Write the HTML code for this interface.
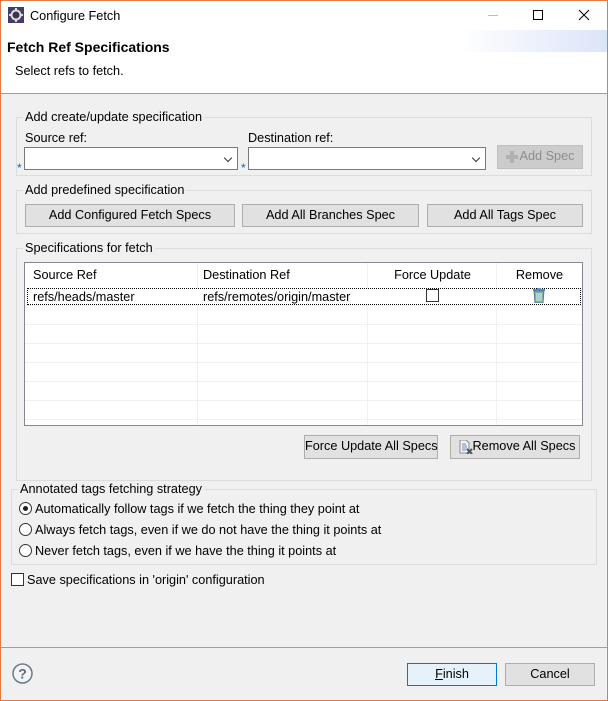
<!DOCTYPE html>
<html><head><meta charset="utf-8">
<style>
*{box-sizing:border-box;margin:0;padding:0}
body{width:608px;height:701px;position:relative;background:#f0f0f0;font-family:"Liberation Sans",sans-serif;font-size:12.7px;color:#000;overflow:hidden}
.a{position:absolute}
.t{position:absolute;white-space:nowrap;line-height:14px}
.grp{position:absolute;border:1px solid #dcdcdc}
.lg{position:absolute;background:#f0f0f0;padding:0 2px;line-height:14px;white-space:nowrap}
.btn{position:absolute;background:#e1e1e1;border:1px solid #adadad;text-align:center;line-height:21px;white-space:nowrap}
.combo{position:absolute;background:#fff;border:1px solid #7a7a7a}
.chev{position:absolute;right:6px;top:7px;width:6px;height:6px;border-right:1px solid #333;border-bottom:1px solid #333;transform:rotate(45deg)}
.radio{position:absolute;width:13px;height:13px;border:1px solid #333;border-radius:50%;background:#fff}
.hl{position:absolute;left:0;width:557px;height:1px;background:#f0f0f0}
.vl{position:absolute;top:0;width:1px;height:162px;background:#f0f0f0}
</style></head><body>
<div class="a" style="left:0;top:0;width:608px;height:701px;border:1px solid #e8793f;z-index:10;pointer-events:none"></div>
<div class="a" style="left:0;top:0;width:608px;height:31px;background:#fff"></div>
<svg class="a" style="left:8px;top:7px" width="16" height="16" viewBox="0 0 16 16"><rect width="16" height="16" fill="#4a3a6a"/><circle cx="8" cy="8" r="5.5" fill="#ddd"/><circle cx="8" cy="8" r="3.5" fill="#3b3550"/><g stroke="#ddd" stroke-width="2"><line x1="8" y1="1" x2="8" y2="3.5"/><line x1="8" y1="12.5" x2="8" y2="15"/><line x1="1" y1="8" x2="3.5" y2="8"/><line x1="12.5" y1="8" x2="15" y2="8"/></g></svg>
<div class="t" style="left:30px;top:9px;font-size:12.7px">Configure Fetch</div>
<div class="a" style="left:488px;top:15px;width:10px;height:1px;background:#bbb"></div>
<div class="a" style="left:533px;top:10px;width:10px;height:10px;border:1px solid #000"></div>
<svg class="a" style="left:578px;top:9px" width="12" height="12"><path d="M1 1L11 11M11 1L1 11" stroke="#000" stroke-width="1"/></svg>
<div class="a" style="left:0;top:31px;width:608px;height:62px;background:#fff"></div>
<div class="a" style="left:460px;top:30px;width:147px;height:22px;background:linear-gradient(90deg,rgba(220,228,248,0),#dce4f8)"></div>
<div class="t" style="left:7px;top:40px;font-size:14px;font-weight:bold">Fetch Ref Specifications</div>
<div class="t" style="left:15px;top:64px">Select refs to fetch.</div>
<div class="a" style="left:0;top:93px;width:608px;height:1px;background:#a0a0a0"></div>

<div class="grp" style="left:16px;top:117px;width:576px;height:59px"></div>
<div class="lg" style="left:23px;top:110px">Add create/update specification</div>
<div class="t" style="left:25px;top:131px">Source ref:</div>
<div class="t" style="left:248px;top:131px">Destination ref:</div>
<div class="t" style="left:17px;top:161px;color:#1f5fa8;font-size:12px">*</div>
<div class="t" style="left:241px;top:161px;color:#1f5fa8;font-size:12px">*</div>
<div class="combo" style="left:24px;top:147px;width:214px;height:23px"><div class="chev"></div></div>
<div class="combo" style="left:248px;top:147px;width:238px;height:23px"><div class="chev"></div></div>
<div class="btn" style="left:497px;top:145px;width:86px;height:24px;background:#cccccc;border-color:#bfbfbf;color:#8d8d8d;padding-left:14px">Add Spec</div>
<svg class="a" style="left:505px;top:150px" width="14" height="14"><path d="M5 1h4v4h4v4h-4v4h-4v-4h-4v-4h4z" fill="#b0b0b0"/></svg>

<div class="grp" style="left:16px;top:190px;width:576px;height:44px"></div>
<div class="lg" style="left:23px;top:183px">Add predefined specification</div>
<div class="btn" style="left:25px;top:204px;width:210px;height:23px">Add Configured Fetch Specs</div>
<div class="btn" style="left:242px;top:204px;width:177px;height:23px">Add All Branches Spec</div>
<div class="btn" style="left:427px;top:204px;width:156px;height:23px">Add All Tags Spec</div>

<div class="grp" style="left:16px;top:248px;width:576px;height:233px"></div>
<div class="lg" style="left:23px;top:241px">Specifications for fetch</div>
<div class="a" style="left:24px;top:262px;width:559px;height:164px;background:#fff;border:1px solid #828790">
  <div class="vl" style="left:172px"></div><div class="vl" style="left:342px"></div><div class="vl" style="left:471px"></div>
  <div class="hl" style="top:42px"></div><div class="hl" style="top:61px"></div><div class="hl" style="top:80px"></div><div class="hl" style="top:99px"></div><div class="hl" style="top:118px"></div><div class="hl" style="top:137px"></div><div class="hl" style="top:156px"></div>
  <div class="t" style="left:8px;top:5px">Source Ref</div>
  <div class="t" style="left:178px;top:5px">Destination Ref</div>
  <div class="t" style="left:343px;top:5px;width:129px;text-align:center">Force Update</div>
  <div class="t" style="left:472px;top:5px;width:85px;text-align:center">Remove</div>
  <div class="a" style="left:2px;top:25px;width:554px;height:17px;border:1px dotted #000;background:#fff"></div>
  <div class="t" style="left:8px;top:27px">refs/heads/master</div>
  <div class="t" style="left:178px;top:27px">refs/remotes/origin/master</div>
  <div class="a" style="left:401px;top:26px;width:13px;height:13px;border:1px solid #333;background:#fff"></div>
  <svg class="a" style="left:508px;top:25px" width="12" height="15" viewBox="0 0 12 15"><rect x="0" y="1" width="12" height="2" fill="#5a8fc0"/><rect x="4" y="0" width="4" height="1" fill="#5a8fc0"/><path d="M1 3h10l-1 12h-8z" fill="#7fb3a8" stroke="#3a6f9a" stroke-width="0.8"/><path d="M4 5v8M6 5v8M8 5v8" stroke="#e8f0d8" stroke-width="1"/></svg>
</div>
<div class="btn" style="left:304px;top:435px;width:134px;height:24px">Force Update All Specs</div>
<div class="btn" style="left:450px;top:435px;width:130px;height:24px;padding-left:18px">Remove All Specs</div>
<svg class="a" style="left:459px;top:440px" width="14" height="14"><path d="M1 0h6l3 3v10h-9z" fill="#f4f4f4" stroke="#8a8a8a"/><path d="M3 4h4M3 6h5M3 8h5M3 10h4" stroke="#6d8fb8"/><path d="M8 9l5 5M13 9l-5 5" stroke="#555" stroke-width="2"/></svg>

<div class="grp" style="left:11px;top:489px;width:586px;height:76px"></div>
<div class="lg" style="left:18px;top:482px">Annotated tags fetching strategy</div>
<div class="radio" style="left:19px;top:502px"><div class="a" style="left:3px;top:3px;width:5px;height:5px;border-radius:50%;background:#222"></div></div>
<div class="t" style="left:35px;top:502px">Automatically follow tags if we fetch the thing they point at</div>
<div class="radio" style="left:19px;top:523px"></div>
<div class="t" style="left:35px;top:523px">Always fetch tags, even if we do not have the thing it points at</div>
<div class="radio" style="left:19px;top:544px"></div>
<div class="t" style="left:35px;top:544px">Never fetch tags, even if we have the thing it points at</div>
<div class="a" style="left:11px;top:573px;width:13px;height:13px;border:1px solid #333;background:#fff"></div>
<div class="t" style="left:27px;top:573px">Save specifications in 'origin' configuration</div>

<div class="a" style="left:0;top:647px;width:608px;height:1px;background:#a0a0a0"></div>
<svg class="a" style="left:12px;top:663px" width="21" height="21"><circle cx="10.5" cy="10.5" r="9.5" fill="#f4f4f4" stroke="#6a7a90" stroke-width="1.5"/><text x="10.5" y="15.5" text-anchor="middle" font-family="Liberation Sans" font-weight="bold" font-size="14" fill="#5a6a80">?</text></svg>
<div class="btn" style="left:407px;top:663px;width:90px;height:23px;background:#e5f1fb;border-color:#0078d7"><u>F</u>inish</div>
<div class="btn" style="left:505px;top:663px;width:90px;height:23px">Cancel</div>
</body></html>
